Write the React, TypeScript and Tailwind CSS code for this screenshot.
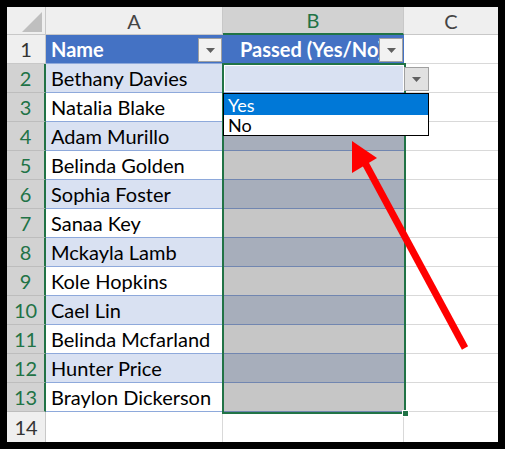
const names = [
  "Bethany Davies",
  "Natalia Blake",
  "Adam Murillo",
  "Belinda Golden",
  "Sophia Foster",
  "Sanaa Key",
  "Mckayla Lamb",
  "Kole Hopkins",
  "Cael Lin",
  "Belinda Mcfarland",
  "Hunter Price",
  "Braylon Dickerson",
]

const font = { fontFamily: "Lato, 'Liberation Sans', sans-serif" }

function Caret() {
  return (
    <svg width="9" height="5" viewBox="0 0 9 5">
      <path d="M0 0 H9 L4.5 5 Z" fill="#606060" />
    </svg>
  )
}

function FilterButton() {
  return (
    <div className="absolute right-[1px] top-[3px] flex h-[24px] w-[24px] items-center justify-center border border-[#a0a0a0] bg-[#f2f2f2]">
      <Caret />
    </div>
  )
}

export default function App() {
  return (
    <div className="relative h-[449px] w-[505px] bg-black p-[7px]" style={font}>
      <div className="relative grid h-[435px] w-[491px] grid-cols-[39px_177px_181px_94px] grid-rows-[28px_repeat(13,29px)_30px] overflow-hidden bg-white text-[20px] leading-none">
        {/* column headers */}
        <div className="relative border-b border-r border-[#c8c8c8] bg-[#efefef]">
          <svg className="absolute left-[15px] top-[5px]" width="21" height="21" viewBox="0 0 21 21">
            <path d="M20 0 V20 H0 Z" fill="#bfbfbf" />
          </svg>
        </div>
        <div className="flex items-center justify-center border-b border-r border-[#c8c8c8] bg-[#efefef] text-[#444]">A</div>
        <div className="flex items-center justify-center border-b-2 border-r border-b-[#217346] border-r-[#c8c8c8] bg-[#d2d2d2] text-[#217346]">B</div>
        <div className="flex items-center justify-center border-b border-[#c8c8c8] bg-[#efefef] text-[#444]">C</div>

        {/* row 1 : table header */}
        <div className="flex items-center justify-center border-b border-r border-[#c8c8c8] bg-[#efefef] text-[#333]">1</div>
        <div className="relative flex items-center border-b border-[#8ea9db] bg-[#4472c4] pl-[5px] font-bold text-white">
          Name
          <FilterButton />
        </div>
        <div className="relative flex items-center overflow-hidden whitespace-nowrap border-b border-[#8ea9db] bg-[#4472c4] pl-[17px] font-bold text-white">
          Passed (Yes/No)
          <FilterButton />
        </div>
        <div className="border-b border-[#d9d9d9]" />

        {names.map((name, i) => {
          const row = i + 2
          const band = row % 2 === 0
          return [
            <div
              key={"h" + row}
              className="flex items-center justify-center border-b border-r-2 border-b-[#bdbdbd] border-r-[#217346] bg-[#d2d2d2] text-[#217346]"
            >
              {row}
            </div>,
            <div
              key={"a" + row}
              className={
                "flex items-center whitespace-nowrap border-b border-[#8ea9db] pl-[5px] text-black " +
                (band ? "bg-[#d9e1f2]" : "bg-white")
              }
            >
              {name}
            </div>,
            <div
              key={"b" + row}
              className={
                "border-b " +
                (row === 2
                  ? "border-[#8ea9db] bg-[#d9e1f2]"
                  : band
                    ? "border-[#7186b0] bg-[#a7aebb]"
                    : "border-[#7186b0] bg-[#c6c6c6]")
              }
            />,
            <div key={"c" + row} className="border-b border-[#d9d9d9]" />,
          ]
        })}

        {/* row 14 */}
        <div className="flex items-center justify-center border-r border-[#c8c8c8] bg-[#efefef] text-[#333]">14</div>
        <div className="border-r border-[#d9d9d9]" />
        <div className="border-r border-[#d9d9d9]" />
        <div />

        {/* selection border */}
        <div className="absolute left-[215px] top-[56px] h-[351px] w-[184px] border-2 border-[#217346]">
          <div className="absolute left-0 top-0 h-[27px] w-[180px] border border-white" />
          <div className="absolute bottom-[-5px] right-[-5px] h-[7px] w-[7px] border border-white bg-[#217346]" />
        </div>

        {/* in-cell dropdown button */}
        <div className="absolute left-[397px] top-[60px] flex h-[24px] w-[25px] items-center justify-center border border-[#a0a0a0] bg-[#e1e1e1]">
          <Caret />
        </div>

        {/* dropdown list */}
        <div className="absolute left-[216px] top-[86px] flex h-[43px] w-[206px] flex-col border border-black bg-white text-[18px]">
          <div className="flex h-[21px] items-center bg-[#0078d7] pl-[4px] text-white">Yes</div>
          <div className="flex h-[20px] items-center pl-[4px] text-black">No</div>
        </div>
      </div>

      {/* red arrow */}
      <svg className="pointer-events-none absolute left-0 top-0" width="505" height="449" viewBox="0 0 505 449">
        <line x1="465" y1="348" x2="364" y2="161" stroke="#ff0000" strokeWidth="7" />
        <path d="M352 141 L377 158 L352 173 Z" fill="#ff0000" />
      </svg>
    </div>
  )
}
